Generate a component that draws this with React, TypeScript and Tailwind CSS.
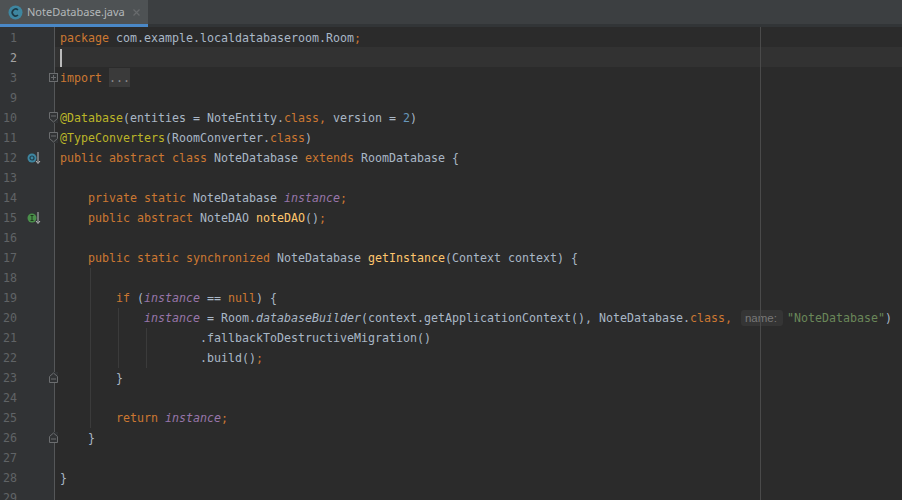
type Tok = [string, string?];

const kw = 'text-[#cc7832]';
const ann = 'text-[#bbb529]';
const inst = 'text-[#9876aa] italic';
const meth = 'text-[#ffc66d]';
const num = 'text-[#6897bb]';
const str = 'text-[#6a8759]';

type Row = { n: number; toks: Tok[] };

const rows: Row[] = [
  { n: 1, toks: [['package', kw], [' com.example.localdatabaseroom.Room'], [';', kw]] },
  { n: 2, toks: [] },
  { n: 3, toks: [['import', kw], [' ']] },
  { n: 9, toks: [] },
  { n: 10, toks: [['@Database', ann], ['(entities = NoteEntity.'], ['class', kw], [',', kw], [' version = '], ['2', num], [')']] },
  { n: 11, toks: [['@TypeConverters', ann], ['(RoomConverter.'], ['class', kw], [')']] },
  { n: 12, toks: [['public abstract class', kw], [' NoteDatabase '], ['extends', kw], [' RoomDatabase {']] },
  { n: 13, toks: [] },
  { n: 14, toks: [['    '], ['private static', kw], [' NoteDatabase '], ['instance', inst], [';', kw]] },
  { n: 15, toks: [['    '], ['public abstract', kw], [' NoteDAO '], ['noteDAO', meth], ['()'], [';', kw]] },
  { n: 16, toks: [] },
  { n: 17, toks: [['    '], ['public static synchronized', kw], [' NoteDatabase '], ['getInstance', meth], ['(Context context) {']] },
  { n: 18, toks: [] },
  { n: 19, toks: [['        '], ['if', kw], [' ('], ['instance', inst], [' == '], ['null', kw], [') {']] },
  { n: 20, toks: [['            '], ['instance', inst], [' = Room.'], ['databaseBuilder', 'italic'], ['(context.getApplicationContext(), NoteDatabase.'], ['class', kw], [',', kw]] },
  { n: 21, toks: [['                    .fallbackToDestructiveMigration()']] },
  { n: 22, toks: [['                    .build()'], [';', kw]] },
  { n: 23, toks: [['        }']] },
  { n: 24, toks: [] },
  { n: 25, toks: [['        '], ['return', kw], [' '], ['instance', inst], [';', kw]] },
  { n: 26, toks: [['    }']] },
  { n: 27, toks: [] },
  { n: 28, toks: [['}']] },
  { n: 29, toks: [] },
];

function FoldPlus() {
  return (
    <svg width="9" height="9" viewBox="0 0 9 9" fill="none" stroke="#6b6d6f" className="absolute right-[-4px] top-[6px] bg-[#313335]">
      <rect x="0.5" y="0.5" width="8" height="8" />
      <path d="M2 4.5h5M4.5 2v5" />
    </svg>
  );
}

function FoldDown() {
  return (
    <svg width="9" height="11" viewBox="0 0 9 11" fill="none" stroke="#6b6d6f" className="absolute right-[-4px] top-[5px] bg-[#313335]">
      <path d="M0.5 0.5h8v6l-4 3.5l-4-3.5z" />
      <path d="M2 4h5" />
    </svg>
  );
}

function FoldUp() {
  return (
    <svg width="9" height="11" viewBox="0 0 9 11" fill="none" stroke="#6b6d6f" className="absolute right-[-4px] top-[5px] bg-[#313335]">
      <path d="M0.5 10.5h8v-6l-4-3.5l-4 3.5z" />
      <path d="M2 7h5" />
    </svg>
  );
}

function GutterMark({ color, inner }: { color: string; inner: string }) {
  return (
    <svg width="14" height="13" viewBox="0 0 14 13" fill="none" className="absolute left-[27px] top-[5px]">
      <circle cx="5" cy="6" r="4.5" fill={color} />
      {inner === 'o' ? (
        <circle cx="5" cy="6" r="2" stroke="#1f3d4a" strokeWidth="1.2" />
      ) : (
        <path d="M3.5 3.5h3M3.5 8.5h3M5 3.5v5" stroke="#1d3a1d" />
      )}
      <path d="M11 0v10.5M9 9l2 2.5L13 9" stroke="#b9bcbe" />
    </svg>
  );
}

export default function App() {
  return (
    <div className="h-[500px] w-[902px] overflow-hidden bg-[#2b2b2b] font-['DejaVu_Sans_Mono',monospace] text-[11.63px] text-[#a9b7c6]">
      <div className="h-[27px] bg-[#3c3f41] flex">
        <div className="w-[148px] bg-[#4e5254] border-b-[3px] border-[#4a88c7] flex items-center pl-[8px] font-['Noto_Sans',sans-serif] text-[11px] text-[#b4b8ba]">
          <svg width="15" height="15" viewBox="0 0 15 15" fill="none">
            <circle cx="7.5" cy="7.5" r="7" fill="#3e86a0" />
            <path d="M10 5a3.4 3.4 0 1 0 0 5" stroke="#1d3a46" strokeWidth="1.6" />
          </svg>
          <span className="ml-[4px]">NoteDatabase.java</span>
          <svg width="7" height="7" viewBox="0 0 7 7" stroke="#686b6d" strokeWidth="1.2" className="ml-[8px]">
            <path d="M0.5 0.5l6 6M6.5 0.5l-6 6" />
          </svg>
        </div>
        <div className="flex-1 border-b-[3px] border-[#323537]" />
      </div>
      <div className="relative">
        <div className="absolute left-[760px] top-0 h-[473px] w-px bg-[#4a4a4a]" />
        <div className="absolute left-[90px] top-[241px] h-[160px] w-px bg-[#3b3b3b]" />
        <div className="absolute left-[118px] top-[281px] h-[60px] w-px bg-[#3b3b3b]" />
        <div className="absolute left-[146px] top-[301px] h-[40px] w-px bg-[#3b3b3b]" />
        {rows.map(({ n, toks }) => (
          <div key={n} className={`flex h-[20px] ${n === 2 ? 'bg-[#323232]' : ''}`}>
            <div className={`relative w-[55px] shrink-0 bg-[#313335] border-r border-[#555759] pr-[37px] pt-[2px] leading-[18px] text-right ${n === 2 ? 'text-[#a4a3a3]' : 'text-[#606366]'}`}>
              {n}
              {n === 3 && <FoldPlus />}
              {(n === 10 || n === 11) && <FoldDown />}
              {(n === 23 || n === 26) && <FoldUp />}
              {n === 12 && <GutterMark color="#3e86a0" inner="o" />}
              {n === 15 && <GutterMark color="#4a8f4a" inner="I" />}
            </div>
            <div className="pl-[5px] pt-[2px] leading-[18px] whitespace-pre flex items-center">
              {n === 2 && <span className="w-[2px] h-[18px] -mt-[1px] bg-[#bbbbbb]" />}
              {toks.map((t, j) => (
                <span key={j} className={t[1]}>{t[0]}</span>
              ))}
              {n === 3 && <span className="bg-[#3a3a3a] text-[#8a8a8a] h-[19px] -mt-[2px] pt-[1px]">...</span>}
              {n === 20 && (
                <>
                  <span className="bg-[#353535] rounded-[3px] text-[#787878] font-['Liberation_Sans',sans-serif] text-[11.5px] w-[42px] pl-[4px] ml-[9px] mr-[4px] h-[16px] leading-[16px]">name:</span>
                  <span className={str}>"NoteDatabase"</span>
                  <span>)</span>
                </>
              )}
            </div>
          </div>
        ))}
      </div>
    </div>
  );
}
